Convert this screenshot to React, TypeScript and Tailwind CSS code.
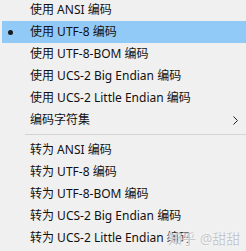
import React from "react";

const groupA = [
  "使用 ANSI 编码",
  "使用 UTF-8 编码",
  "使用 UTF-8-BOM 编码",
  "使用 UCS-2 Big Endian 编码",
  "使用 UCS-2 Little Endian 编码",
];

const groupB = [
  "转为 ANSI 编码",
  "转为 UTF-8 编码",
  "转为 UTF-8-BOM 编码",
  "转为 UCS-2 Big Endian 编码",
  "转为 UCS-2 Little Endian 编码",
];

const Item = ({
  label,
  active,
  checked,
  submenu,
}: {
  label: string;
  active?: boolean;
  checked?: boolean;
  submenu?: boolean;
}) => (
  <div
    className={`relative flex h-[22px] items-center whitespace-nowrap pl-[30px] ${
      active ? "ml-[2px] bg-[#91c9f7]" : ""
    }`}
  >
    {checked && (
      <span className="absolute left-[6px] top-[9px] h-[5px] w-[5px] rounded-full bg-[#1a1a1a]" />
    )}
    <span className={active ? "-ml-[2px]" : ""}>{label}</span>
    {submenu && (
      <svg
        className="absolute right-[8px] top-[7px]"
        width="5"
        height="9"
        viewBox="0 0 5 9"
      >
        <polyline points="0.5,0.5 4.5,4.5 0.5,8.5" fill="none" stroke="#222" strokeWidth="1" />
      </svg>
    )}
  </div>
);

export default function App() {
  return (
    <div
      className="relative h-[251px] w-[246px] overflow-hidden bg-[#f0f0f0] text-[12px] text-[#111]"
      style={{ fontFamily: '"Noto Sans", "Noto Sans CJK SC", sans-serif' }}
    >
      <div className="-mt-px">
        {groupA.map((t, i) => (
          <Item key={t} label={t} active={i === 1} checked={i === 1} />
        ))}
        <Item label="编码字符集" submenu />
        <div className="mb-[4px] ml-[25px] mt-[3px] h-px bg-[#d4d4d4]" />
        {groupB.map((t) => (
          <Item key={t} label={t} />
        ))}
      </div>
      <div className="pointer-events-none absolute left-[168px] top-[228px] whitespace-nowrap text-[14px] text-[#c8c8c8] [text-shadow:0_0_2px_#fff,0_0_1px_#fff]">
        知乎 @甜甜
      </div>
    </div>
  );
}
